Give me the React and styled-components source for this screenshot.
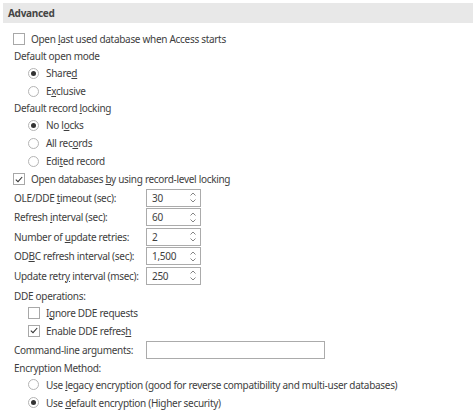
import React from 'react';
import styled, { createGlobalStyle } from 'styled-components';

const GlobalStyle = createGlobalStyle`
  html, body {
    margin: 0;
    padding: 0;
    background: #ffffff;
  }
  body {
    font-family: 'Noto Sans', 'Open Sans', 'Liberation Sans', sans-serif;
    font-size: 10px;
    letter-spacing: -0.3px;
    color: #3e3e3e;
  }
`;

const Panel = styled.div`
  width: 474px;
  height: 412px;
  padding-top: 3px;
  box-sizing: border-box;
  overflow: hidden;
`;

const SectionHeader = styled.div`
  margin-left: 3px;
  margin-right: 1px;
  height: 20px;
  background: #e8e8e8;
  display: flex;
  align-items: center;
  padding-left: 5px;
  font-weight: bold;
  color: #444444;
`;

const Body = styled.div`
  display: flex;
  flex-direction: column;
  padding-top: 7px;
  padding-left: 13px;
`;

const Row = styled.div`
  display: flex;
  align-items: center;
  height: ${(p) => p.$h || 18}px;
  padding-left: ${(p) => (p.$indent ? 15 : 0)}px;
  white-space: nowrap;
`;

const Heading = styled(Row)`
  height: 16px;
  padding-left: 1px;
`;

const Text = styled.span`
  white-space: pre;
`;

const Box = styled.span`
  width: 10px;
  height: 10px;
  border: 1px solid #a8a8a8;
  background: #fff;
  margin-right: 6px;
  display: flex;
  align-items: center;
  justify-content: center;
  flex-shrink: 0;
`;

const Dot = styled.span`
  width: 9px;
  height: 9px;
  border: 1px solid #b4b4b4;
  border-radius: 50%;
  background: #fff;
  margin-right: 7px;
  display: flex;
  align-items: center;
  justify-content: center;
  flex-shrink: 0;

  &::after {
    content: '';
    display: ${(p) => (p.$on ? 'block' : 'none')};
    width: 5px;
    height: 5px;
    border-radius: 50%;
    background: #333;
  }
`;

const U = styled.span`
  text-decoration: underline;
  text-decoration-thickness: 1px;
  text-underline-offset: 1px;
`;

const SpinList = styled.div`
  display: flex;
  flex-direction: column;
  margin-bottom: 2px;
`;

const FieldRow = styled.div`
  display: flex;
  align-items: center;
  height: ${(p) => p.$h || 19.5}px;
  padding-left: 1px;
  white-space: pre;
`;

const FieldLabel = styled.span`
  width: 132px;
  flex-shrink: 0;
`;

const Spin = styled.div`
  width: 44px;
  height: 16px;
  border: 1px solid #ababab;
  display: flex;
  align-items: center;
  justify-content: space-between;
  padding: 0 4px 0 5px;
`;

const Arrows = styled.svg`
  width: 6px;
  height: 11px;
`;

const TextBox = styled.div`
  width: 177px;
  height: 16px;
  border: 1px solid #ababab;
  background: #fff;
`;

function Check({ on }) {
  return (
    <Box>
      {on && (
        <svg width="8" height="7" viewBox="0 0 8 7">
          <path d="M0.8 3.6 L3 5.6 L7.2 1" fill="none" stroke="#333" strokeWidth="1.1" />
        </svg>
      )}
    </Box>
  );
}

function SpinBox({ value }) {
  return (
    <Spin>
      <span>{value}</span>
      <Arrows viewBox="0 0 6 11">
        <path d="M0.5 3.5 L3 1 L5.5 3.5" fill="none" stroke="#777" strokeWidth="0.9" />
        <path d="M0.5 7.5 L3 10 L5.5 7.5" fill="none" stroke="#777" strokeWidth="0.9" />
      </Arrows>
    </Spin>
  );
}

const spinFields = [
  [<>OLE/DDE <U>t</U>imeout (sec):</>, '30'],
  [<>Refresh <U>i</U>nterval (sec):</>, '60'],
  [<>Number of <U>u</U>pdate retries:</>, '2'],
  [<>OD<U>B</U>C refresh interval (sec):</>, '1,500'],
  [<>Update retr<U>y</U> interval (msec):</>, '250'],
];

export default function App() {
  return (
    <Panel>
      <GlobalStyle />
      <SectionHeader>Advanced</SectionHeader>
      <Body>
        <Row>
          <Check />
          <Text>Open <U>l</U>ast used database when Access starts</Text>
        </Row>
        <Heading>
          <Text>Default open mode</Text>
        </Heading>
        <Row $indent>
          <Dot $on />
          <Text>Share<U>d</U></Text>
        </Row>
        <Row $indent>
          <Dot />
          <Text>E<U>x</U>clusive</Text>
        </Row>
        <Heading>
          <Text>Default record <U>l</U>ocking</Text>
        </Heading>
        <Row $indent>
          <Dot $on />
          <Text>No l<U>o</U>cks</Text>
        </Row>
        <Row $indent>
          <Dot />
          <Text>All rec<U>o</U>rds</Text>
        </Row>
        <Row $indent>
          <Dot />
          <Text>Edi<U>t</U>ed record</Text>
        </Row>
        <Row>
          <Check on />
          <Text>Open databases <U>b</U>y using record-level locking</Text>
        </Row>
        <SpinList>
          {spinFields.map(([label, value], i) => (
            <FieldRow key={i}>
              <FieldLabel>{label}</FieldLabel>
              <SpinBox value={value} />
            </FieldRow>
          ))}
        </SpinList>
        <Heading>
          <Text>DDE operations:</Text>
        </Heading>
        <Row $indent>
          <Check />
          <Text>I<U>g</U>nore DDE requests</Text>
        </Row>
        <Row $indent>
          <Check on />
          <Text>Enable DDE refres<U>h</U></Text>
        </Row>
        <FieldRow $h={20}>
          <FieldLabel>Command-line arguments:</FieldLabel>
          <TextBox />
        </FieldRow>
        <Heading>
          <Text>Encryption Method:</Text>
        </Heading>
        <Row $indent>
          <Dot />
          <Text>Use <U>l</U>egacy encryption (good for reverse compatibility and multi-user databases)</Text>
        </Row>
        <Row $indent>
          <Dot $on />
          <Text>Use <U>d</U>efault encryption (Higher security)</Text>
        </Row>
      </Body>
    </Panel>
  );
}
